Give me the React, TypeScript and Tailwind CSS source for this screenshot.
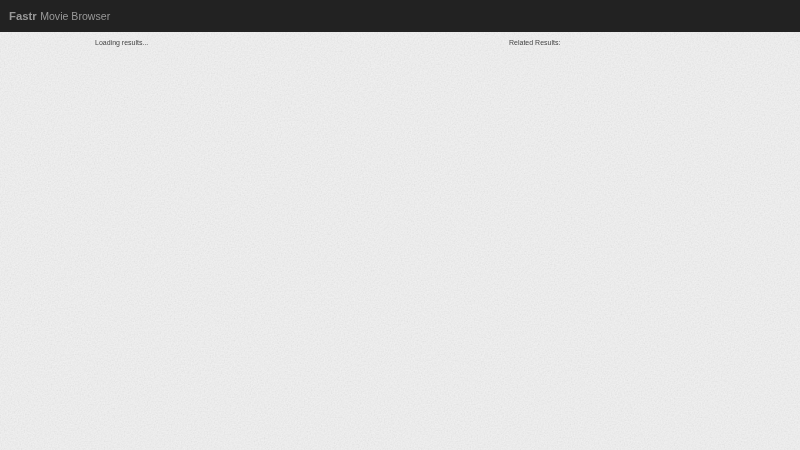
export default function App() {
  return (
    <div className="relative min-h-[450px] overflow-hidden bg-[#f1f1f1] font-['Liberation_Sans',Arial,sans-serif]">
      {/* Paper grain */}
      <svg className="absolute inset-0 h-full w-full opacity-10" aria-hidden="true">
        <filter id="grain">
          <feTurbulence type="fractalNoise" baseFrequency="0.7" numOctaves="2" />
          <feColorMatrix type="matrix" values="1 0 0 0 0  1 0 0 0 0  1 0 0 0 0  0 0 0 0 1" />
        </filter>
        <rect width="100%" height="100%" filter="url(#grain)" />
      </svg>

      {/* Navbar */}
      <div className="relative flex h-8 items-baseline bg-[#222222] pl-[9px] leading-8 text-[#999999] will-change-transform">
        <span className="text-[11.3px] font-bold">Fastr</span>
        <span className="ml-[3.5px] text-[10.6px]">Movie Browser</span>
      </div>

      {/* Results columns */}
      <div className="relative flex pt-[7px] text-[7px] leading-[8px] text-[#444444] will-change-transform">
        <div className="w-[509px] pl-[95px]">Loading results...</div>
        <div>Related Results:</div>
      </div>
    </div>
  );
}
